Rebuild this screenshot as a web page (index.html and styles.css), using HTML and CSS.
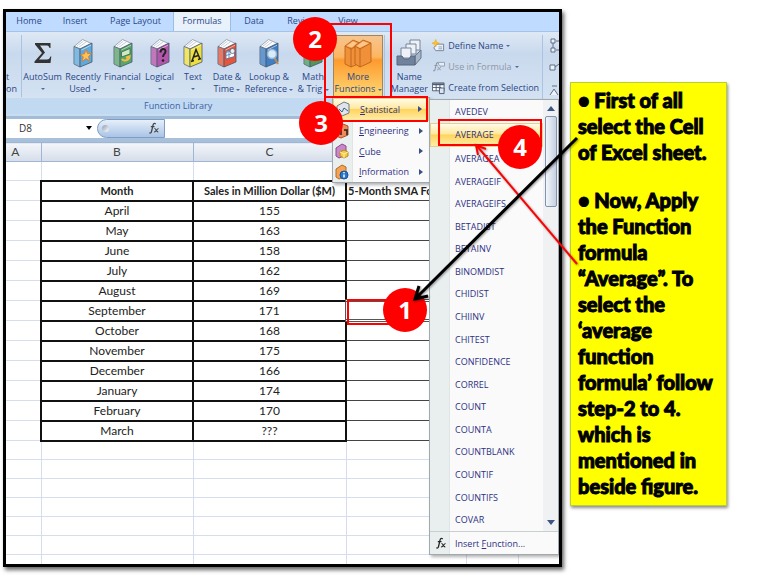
FILE: index.html
```html
<!DOCTYPE html>
<html lang="en">
<head>
  <meta charset="UTF-8">
  <title>Moving average in Excel</title>
  <link rel="stylesheet" href="styles.css">
</head>
<body>

<!-- shared icon shapes -->
<svg class="defs" aria-hidden="true">
  <symbol id="book" viewBox="0 0 20 30">
    <path d="M1 8.500L9.500 1.500L18.500 5.500L7 11Z" fill="#fff" stroke="#8796a8" stroke-width=".8"/>
    <path d="M3.500 8.500L10.500 3M5.500 9.500L13 4" stroke="#a9b6c6" stroke-width=".7"/>
    <path d="M1 8.500L7 11V29L1 26Z" fill="currentColor" stroke="#46566b" stroke-width=".8"/>
    <path d="M1 8.500L7 11V29L1 26Z" fill="#fff" opacity=".2"/>
    <path d="M7 11L19 5V24L7 29Z" fill="currentColor" stroke="#46566b" stroke-width=".8"/>
    <path d="M8.500 12L18 7.200" stroke="#fff" opacity=".5"/>
  </symbol>
  <symbol id="fx" viewBox="0 0 14 14">
    <path d="M9 2.200C7.500 1 6.300 1.700 5.800 4L4 11.500C3.600 13 2.500 13.200 1.600 12.400M3.300 5.500H7.600" fill="none" stroke="currentColor" stroke-width="1.500"/>
    <path d="M7.500 7.500C9.500 7 9.500 12 12 11.500M12.300 7.500C10.500 7.500 9.500 12 7 11.700" fill="none" stroke="currentColor" stroke-width="1.200"/>
  </symbol>
</svg>

<main class="slide">

  <section class="excel">
    <nav class="tabs">
      <a href="#">Home</a>
      <a href="#">Insert</a>
      <a href="#">Page Layout</a>
      <a href="#" class="active">Formulas</a>
      <a href="#">Data</a>
      <a href="#">Review</a>
      <a href="#">View</a>
    </nav>

    <div class="ribbon">
      <div class="group library">
        <div class="tools">
          <button class="tool cut"><span>t</span><span>on</span></button>
          <button class="tool">
            <svg viewBox="0 0 20 30"><path d="M2 5H17.500V10H16.500C16 8 15 7.500 13 7.500H7L12 14.500L6 21.500H14C16 21.500 16.800 20.500 17.300 18.500H18.300L17.500 25H1.500V23.500L9 15L2 6.500Z" fill="#333"/></svg>
            <span>AutoSum</span><i class="caret"></i>
          </button>
          <button class="tool">
            <svg viewBox="0 0 20 30"><use href="#book" color="#5fa9dc"/><path d="M13 11.500L14.500 15.500L18.500 15.500L15.500 18.500L16.500 23L13 20.500L9 23.500L10.300 18.800L7.500 16.500L11.500 15.800Z" fill="#ffc153" stroke="#e07a1c" stroke-width=".8"/></svg>
            <span>Recently</span><span>Used <i class="caret"></i></span>
          </button>
          <button class="tool">
            <svg viewBox="0 0 20 30"><use href="#book" color="#5aa56b"/><path d="M8.500 14L17 10.500V16L8.500 19Z" fill="#cfe8c8" stroke="#2e6a3d" stroke-width=".8"/><path d="M9 21C11 24 16 22 16.500 18.500L13 19.500" fill="none" stroke="#f5bd3f" stroke-width="2"/></svg>
            <span>Financial</span><i class="caret"></i>
          </button>
          <button class="tool">
            <svg viewBox="0 0 20 30"><use href="#book" color="#b355ac"/><path d="M10.500 14.500C10.500 10.500 15.500 9.500 15.500 13.500C15.500 16 13 15.800 13 19" fill="none" stroke="#222" stroke-width="2"/><circle cx="13" cy="22.500" r="1.300" fill="#222"/></svg>
            <span>Logical</span><i class="caret"></i>
          </button>
          <button class="tool">
            <svg viewBox="0 0 20 30"><use href="#book" color="#eedf3f"/><path d="M9 23L13 11.500L17 21M10.500 19L15.500 17.500M8 23.500L11 22.500M15 21.500L18 20.500" fill="none" stroke="#222" stroke-width="1.500"/></svg>
            <span>Text</span><i class="caret"></i>
          </button>
          <button class="tool">
            <svg viewBox="0 0 20 30"><use href="#book" color="#e4553b"/><path d="M9 13.500L17.500 11V18.500L9 21Z" fill="#fff" stroke="#476a9c" stroke-width=".8"/><path d="M9 14.500L17.500 12M12 13V20M9 17.500L14 16" stroke="#6b8dc0"/><circle cx="15.500" cy="13" r="2.500" fill="#e8eef8" stroke="#54616f" stroke-width=".8"/></svg>
            <span>Date &amp;</span><span>Time <i class="caret"></i></span>
          </button>
          <button class="tool">
            <svg viewBox="0 0 20 30"><use href="#book" color="#3f7fc4"/><path d="M15.500 20L19 26" stroke="#b58b5c" stroke-width="2"/><circle cx="13" cy="16" r="4.500" fill="#d6ebfb" stroke="#9bb2ca" stroke-width="1.500"/></svg>
            <span>Lookup &amp;</span><span>Reference <i class="caret"></i></span>
          </button>
          <button class="tool">
            <svg viewBox="0 0 20 30"><use href="#book" color="#4a9a5f"/></svg>
            <span>Math</span><span>&amp; Trig <i class="caret"></i></span>
          </button>
          <button class="tool open">
            <svg class="wide" viewBox="0 0 28 30">
              <g fill="#f0913a" stroke="#b35e15" stroke-width=".8">
                <path d="M1 8L9 2L16 5V25L7 29L1 26Z"/><path d="M7 11V29M1 8L7 11L16 6"/>
                <path d="M11 8L19 2L27 5V24L16 29L11 26Z"/><path d="M16 11V29M11 8L16 11L27 5"/>
              </g>
              <path d="M12.500 8L19 3.200L25 5.200L16 9.700Z" fill="#ffc68b"/><path d="M2.500 8L9 3.200L13 5L8 9.500Z" fill="#ffc68b"/>
            </svg>
            <span>More</span><span>Functions <i class="caret"></i></span>
          </button>
        </div>
        <div class="group-name">Function Library</div>
      </div>

      <div class="group names">
        <button class="tool">
          <svg class="wide" viewBox="0 0 28 30">
            <g fill="#eef2f7" stroke="#76859a"><path d="M15 2H25V12H15Z"/><path d="M11 6H21V16H11Z"/><path d="M6 10H16V20H6Z"/></g>
            <path d="M20 18L26 12V20L20 27Z" fill="#a9b6c8" stroke="#66758b"/>
            <path d="M2 18H7L9 21H14L16 18H20V27H2Z" fill="#71839c" stroke="#56667d"/>
          </svg>
          <span>Name</span><span>Manager</span>
        </button>
        <div class="stack">
          <button>
            <svg viewBox="0 0 14 14"><path d="M5 5H12.500V12H4L2 9Z" fill="#eef3fa" stroke="#6e7f99"/><path d="M7 8H11M7 10H11" stroke="#8b9ab0"/><path d="M4 0L5 3L8 4L5 5L4 8L3 5L0 4L3 3Z" fill="#ffc61e" stroke="#eda20e" stroke-width=".6"/></svg>
            Define Name <i class="caret"></i>
          </button>
          <button disabled>
            <svg viewBox="0 0 14 14"><use href="#fx" width="11" height="13"/><path d="M7 2H13.500V6H9L7 4Z" fill="#e8edf4" stroke="#8f9db3"/></svg>
            Use in Formula <i class="caret"></i>
          </button>
          <button>
            <svg viewBox="0 0 14 14"><path d="M.5 1.500H13V10H.5Z" fill="#fff" stroke="#4c5b73"/><path d="M1 3H13" stroke="#4c5b73" stroke-width="2"/><path d="M1 6.500H10M4.500 3V10M8.500 3V10" stroke="#4c5b73"/><path d="M8 7H13V13H8Z" fill="#dbe4f0" stroke="#4c5b73"/></svg>
            Create from Selection
          </button>
        </div>
      </div>

      <div class="group audit">
        <svg viewBox="0 0 10 64"><g fill="#eef3fa" stroke="#5d6e88"><path d="M2 1H6V5H2ZM2 10H6V14H2Z"/><path d="M4 5V10M7 3H10M7 12H10"/><path d="M1 27H6V32H1ZM6 29L10 26"/><path d="M1 57L5 51L9 57M3 48H8"/></g></svg>
      </div>
    </div>

    <div class="formula-bar">
      <input class="name-box" aria-label="Name box" value="D8">
      <i class="caret"></i>
      <div class="fx-area"><i class="knob"></i><svg viewBox="0 0 14 14"><use href="#fx"/></svg></div>
      <input class="formula" aria-label="Formula">
    </div>

    <table class="sheet">
      <colgroup><col class="a"><col class="b"><col class="c"><col class="d"><col class="e"><col></colgroup>
      <thead>
        <tr><th>A</th><th>B</th><th>C</th><th></th><th></th><th></th></tr>
      </thead>
      <tbody>
        <tr><td></td><td></td><td></td><td></td><td></td><td></td></tr>
      </tbody>
      <tbody class="data">
        <tr class="head"><td></td><th>Month</th><th>Sales in Million Dollar ($M)</th><th>5-Month SMA Fo</th><td></td><td></td></tr>
        <tr><td></td><td>April</td><td>155</td><td></td><td></td><td></td></tr>
        <tr><td></td><td>May</td><td>163</td><td></td><td></td><td></td></tr>
        <tr><td></td><td>June</td><td>158</td><td></td><td></td><td></td></tr>
        <tr><td></td><td>July</td><td>162</td><td></td><td></td><td></td></tr>
        <tr><td></td><td>August</td><td>169</td><td></td><td></td><td></td></tr>
        <tr><td></td><td>September</td><td>171</td><td class="selected"></td><td></td><td></td></tr>
        <tr><td></td><td>October</td><td>168</td><td></td><td></td><td></td></tr>
        <tr><td></td><td>November</td><td>175</td><td></td><td></td><td></td></tr>
        <tr><td></td><td>December</td><td>166</td><td></td><td></td><td></td></tr>
        <tr><td></td><td>January</td><td>174</td><td></td><td></td><td></td></tr>
        <tr><td></td><td>February</td><td>170</td><td></td><td></td><td></td></tr>
        <tr><td></td><td>March</td><td>???</td><td></td><td></td><td></td></tr>
      </tbody>
      <tbody>
        <tr><td></td><td></td><td></td><td></td><td></td><td></td></tr>
        <tr><td></td><td></td><td></td><td></td><td></td><td></td></tr>
        <tr><td></td><td></td><td></td><td></td><td></td><td></td></tr>
        <tr><td></td><td></td><td></td><td></td><td></td><td></td></tr>
        <tr><td></td><td></td><td></td><td></td><td></td><td></td></tr>
        <tr><td></td><td></td><td></td><td></td><td></td><td></td></tr>
        <tr class="last"><td></td><td></td><td></td><td></td><td></td><td></td></tr>
      </tbody>
    </table>

    <!-- More Functions drop-down -->
    <div class="menu categories">
      <button class="hot"><svg viewBox="0 0 14 16"><path d="M1 5L8 1L13 3V12L6 15L1 13Z" fill="#dfe5ea" stroke="#6c7a88"/><path d="M3 8L6 11L8 7L12 10" fill="none" stroke="#3d5c85"/></svg><span><u>S</u>tatistical</span></button>
      <button><svg viewBox="0 0 14 16"><path d="M1 5L8 1L13 3V12L6 15L1 13Z" fill="#ef8a5b" stroke="#b34c22"/><path d="M6 7V12M9 7H12V12" fill="none" stroke="#222" stroke-width="1.500"/></svg><span><u>E</u>ngineering</span></button>
      <button><svg viewBox="0 0 14 16"><path d="M1 5L7 1L11 3V12L4 15L1 13Z" fill="#c888c8" stroke="#8a4a8a"/><path d="M5 9L9 7L13 9V13L9 15L5 13Z" fill="#f5c945" stroke="#b98a14"/><path d="M5 9L9 11L13 9M9 11V15" fill="none" stroke="#fff0a8"/></svg><span><u>C</u>ube</span></button>
      <button><svg viewBox="0 0 14 16"><path d="M1 5L7 1L11 3V12L4 15L1 13Z" fill="#f2a355" stroke="#b86a1c"/><circle cx="9" cy="11" r="4" fill="#2676cf" stroke="#174f96"/><path d="M9 10.500V13.500M9 8V9.300" stroke="#fff" stroke-width="1.500"/></svg><span><u>I</u>nformation</span></button>
    </div>

    <div class="menu functions">
      <div class="list">
        <button>AVEDEV</button>
        <button class="hot">AVERAGE</button>
        <button>AVERAGEA</button>
        <button>AVERAGEIF</button>
        <button>AVERAGEIFS</button>
        <button>BETADIST</button>
        <button>BETAINV</button>
        <button>BINOMDIST</button>
        <button>CHIDIST</button>
        <button>CHIINV</button>
        <button>CHITEST</button>
        <button>CONFIDENCE</button>
        <button>CORREL</button>
        <button>COUNT</button>
        <button>COUNTA</button>
        <button>COUNTBLANK</button>
        <button>COUNTIF</button>
        <button>COUNTIFS</button>
        <button>COVAR</button>
      </div>
      <div class="scroll"><i class="up"></i><i class="thumb"></i><i class="down"></i></div>
      <button class="insert"><svg viewBox="0 0 14 14"><use href="#fx"/></svg><span>Insert <u>F</u>unction...</span></button>
    </div>
  </section>

  <aside class="note">
    <p>• First of all<br>select the Cell<br>of Excel sheet.</p>
    <p>• Now, Apply<br>the Function<br>formula<br>“Average”. To<br>select the<br>‘average<br>function<br>formula’ follow<br>step-2 to 4.<br>which is<br>mentioned in<br>beside figure.</p>
  </aside>

  <!-- step markers and arrows drawn over the sheet -->
  <div class="frame f1"></div>
  <div class="frame f2"></div>
  <div class="frame f3"></div>
  <div class="frame f4"></div>
  <div class="step s1">1</div>
  <div class="step s2">2</div>
  <div class="step s3">3</div>
  <svg class="arrows" width="768" height="576" viewBox="0 0 768 576">
    <g fill="none" stroke="#f00" stroke-width="2"><path d="M577 264L477 146"/><path d="M478 155L476 145L486 149"/></g>
    <g fill="none" stroke="#000" stroke-width="3"><path d="M577 138L416 298"/><path d="M419 286L415 299L428 296"/></g>
  </svg>
  <div class="step s4">4</div>
</main>

</body>
</html>
```
FILE: styles.css
```css
* {
  box-sizing: border-box;
}
body {
  margin: 0;
  background: #fff;
  font-family: "Open Sans", sans-serif;
  font-size: 9px;
}
button {
  font: inherit;
  color: inherit;
  background: none;
  border: none;
  padding: 0;
  margin: 0;
}
.defs {
  display: none;
}
.slide {
  position: relative;
  display: grid;
  grid-template-columns: minmax(0, 1fr) 157px;
  gap: 8px;
  align-items: start;
  padding: 9px 41px 8px 3px;
}

/* Excel window */
.excel {
  position: relative;
  border: 3px solid #000;
  background: #fff;
  box-shadow: 2px 3px 4px rgba(0, 0, 0, 0.6);
  color: #2a4787;
}
.tabs {
  display: grid;
  grid-template-columns: 46px 46px 75px 58px 46px 50px 42px;
  height: 19px;
  background: #bfdbff;
}
.tabs a {
  color: #2a4787;
  text-decoration: none;
  text-align: center;
  line-height: 17px;
}
.tabs .active {
  background: #e9f1fb;
  border: 1px solid #9dbde6;
  border-width: 0 1px;
}
.caret {
  display: inline-block;
  border: 2px solid transparent;
  border-top-color: #4a6aa5;
  border-bottom: 0;
  vertical-align: middle;
}

/* Ribbon */
.ribbon {
  display: flex;
  gap: 3px;
  height: 85px;
  padding-top: 3px;
  overflow: hidden;
  background: linear-gradient(#dfe9f5, #c9d9ed 25%, #d6e4f3 90%, #c5dcf2);
  border-top: 1px solid #a5c3e8;
}
.group {
  border-right: 1px solid #a9c3e0;
}
.library {
  width: 380px;
}
.tools {
  display: grid;
  grid-template-columns: 16px 41px 40px 39px 35px 32px 36px 48px 40px 50px;
  height: 63px;
}
.tool {
  display: flex;
  flex-direction: column;
  align-items: center;
  height: 62px;
  padding-top: 3px;
  line-height: 12px;
  white-space: nowrap;
}
.tool svg {
  width: 20px;
  height: 30px;
  margin-bottom: 3px;
}
.tool .wide {
  width: 28px;
}
.tool > .caret {
  margin-top: 5px;
}
.cut {
  align-items: flex-start;
  padding-top: 36px;
  border-right: 1px solid #a9c3e0;
}
.open {
  background: linear-gradient(#f6c48f, #fdb661 35%, #fd9a2e 40%, #ffd873);
  border: 1px solid #a58553;
  padding-top: 2px;
}
.group-name {
  height: 16px;
  line-height: 15px;
  padding-right: 34px;
  background: #c1d9f1;
  text-align: center;
  color: #3e61a5;
}
.names {
  display: flex;
  width: 155px;
  gap: 4px;
  padding-left: 2px;
}
.names .tool {
  width: 38px;
}
.stack {
  display: grid;
  grid-template-rows: 21px 21px 21px;
  align-content: start;
}
.stack button {
  display: flex;
  align-items: center;
  gap: 3px;
  white-space: nowrap;
}
.stack svg {
  width: 13px;
  height: 14px;
}
.stack button:disabled {
  color: #8d97a8;
}
.audit {
  flex: 1;
  padding: 3px 0 0 3px;
  border: none;
}
.audit svg {
  width: 10px;
  height: 64px;
}

/* Formula bar */
.formula-bar {
  display: flex;
  align-items: center;
  height: 26px;
  padding-bottom: 1px;
  border-top: 3px solid #a3bcd8;
  border-bottom: 4px solid #a9c0db;
}
.name-box {
  width: 80px;
  border: none;
  padding: 0 0 0 13px;
  font: 10px "Open Sans", sans-serif;
  color: #333;
  background: none;
}
.formula-bar > .caret {
  border-width: 4px 3px 0;
  border-top-color: #000;
}
.fx-area {
  display: flex;
  justify-content: space-between;
  align-items: center;
  width: 68px;
  height: 19px;
  margin-left: 5px;
  padding: 0 4px;
  border: 1px solid #7d9cc6;
  border-radius: 10px 0 0 10px;
  background: linear-gradient(#e6effa, #a9c4e6);
  color: #444;
}
.fx-area svg {
  width: 12px;
  height: 12px;
}
.knob {
  width: 7px;
  height: 7px;
  border-radius: 50%;
  background: linear-gradient(135deg, #8e9bb0, #fff);
}
.formula {
  flex: 1;
  min-width: 0;
  border: none;
  background: none;
}

/* Sheet */
.sheet {
  width: 100%;
  table-layout: fixed;
  border-collapse: collapse;
  font-family: Lato, sans-serif;
  font-size: 12px;
  line-height: 16px;
  color: #222;
}
.a { width: 35px; }
.b { width: 152px; }
.c { width: 153px; }
.d { width: 120px; }
.e { width: 52px; }
.sheet td, .sheet th {
  height: 19px;
  padding: 0;
  border: 1px solid #d6deec;
  text-align: center;
  white-space: nowrap;
}
.sheet tr > :first-child {
  border-left: none;
}
.sheet tr > :last-child {
  border-right: none;
}
.sheet thead th {
  background: linear-gradient(#f3f6fa, #d5dde9);
  border-color: #9eb6d3;
  font-weight: normal;
  color: #444;
}
.sheet thead th:first-child {
  padding-right: 16px;
}
.data td, .data th {
  height: 20px;
}
.data th {
  font-size: 11px;
}
.data tr > :nth-child(2), .data tr > :nth-child(3) {
  border: 2px solid #111;
}
.data tr > :nth-child(4) {
  border: 1px solid #444;
}
.data .head > :nth-child(4) {
  border-top: 2px solid #111;
  padding-left: 1px;
  text-align: left;
}
.data tr > .selected {
  border: 3px double #555;
}
.sheet .last td {
  height: 9px;
  border-bottom: none;
}

/* Menus */
.menu {
  position: absolute;
  border: 1px solid #a0a8b0;
  background: linear-gradient(90deg, #e9eeee 19px, #c9cfcf 19px, #fafafa 20px);
  box-shadow: 2px 2px 3px rgba(0, 0, 0, 0.3);
  color: #2e3184;
}
.menu .hot {
  background: linear-gradient(#fffbe6, #ffe9a0 45%, #ffd45c 50%, #ffedaa);
  border: 1px solid #e5cf8e;
}
.categories {
  left: 326px;
  top: 85px;
  width: 98px;
  height: 86px;
  display: grid;
}
.categories button {
  display: grid;
  grid-template-columns: 20px 1fr 10px;
  column-gap: 4px;
  align-items: center;
  padding-left: 2px;
  text-align: left;
}
.categories svg {
  width: 14px;
  height: 16px;
}
.categories button::after {
  content: "";
  border: 3px solid transparent;
  border-left: 4px solid #3b4f86;
  border-right: 0;
  width: 0;
}
.functions {
  left: 423px;
  top: 87px;
  width: 130px;
  display: grid;
  grid-template-columns: 1fr 15px;
}
.list {
  display: grid;
  height: 431px;
}
.list button {
  padding-left: 25px;
  text-align: left;
}
.list .hot {
  padding-left: 24px;
}
.scroll {
  display: flex;
  flex-direction: column;
  align-items: center;
  padding: 6px 0;
  background: #f0f1f3;
}
.up {
  border: 4px solid transparent;
  border-bottom: 5px solid #3d5584;
  border-top: 0;
}
.down {
  margin-top: auto;
  border: 4px solid transparent;
  border-top: 5px solid #3d5584;
  border-bottom: 0;
}
.thumb {
  width: 12px;
  height: 91px;
  margin-top: 5px;
  border: 1px solid #8392ad;
  border-radius: 2px;
  background: linear-gradient(90deg, #f3f6fa, #c5d0e2);
}
.insert {
  grid-column: 1 / -1;
  display: flex;
  align-items: center;
  gap: 8px;
  height: 23px;
  padding-left: 5px;
  border-top: 1px solid #c9cfcf;
}
.insert svg {
  width: 12px;
  height: 12px;
  color: #222;
}

/* Yellow note */
.note {
  margin-top: 73px;
  height: 424px;
  padding: 4px 0 0 7px;
  background: #ff0;
  border: 1px solid #b5cf3a;
  box-shadow: 1px 2px 3px rgba(0, 0, 0, 0.45);
  font-family: Lato, sans-serif;
  font-size: 20px;
  font-weight: 900;
  line-height: 26px;
  color: #000;
  -webkit-text-stroke: 1px #000;
  white-space: nowrap;
}
.note p {
  margin: 0 0 22px;
}

/* Step markers */
.frame {
  position: absolute;
  border: 2px solid #f00;
}
.f1 { left: 347px; top: 299px; width: 60px; height: 26px; }
.f2 { left: 324px; top: 23px; width: 68px; height: 75px; }
.f3 { left: 324px; top: 96px; width: 104px; height: 26px; }
.f4 { left: 438px; top: 119px; width: 104px; height: 27px; }
.step {
  position: absolute;
  width: 44px;
  height: 44px;
  border-radius: 50%;
  background: #f00;
  color: #fff;
  font: bold 24px/44px "Open Sans", sans-serif;
  text-align: center;
}
.s1 { left: 383px; top: 288px; }
.s2 { left: 293px; top: 17px; }
.s3 { left: 299px; top: 101px; }
.s4 { left: 498px; top: 125px; }
.arrows {
  position: absolute;
  left: 0;
  top: 0;
  filter: drop-shadow(1px 1px 1px rgba(0, 0, 0, 0.4));
}
```
